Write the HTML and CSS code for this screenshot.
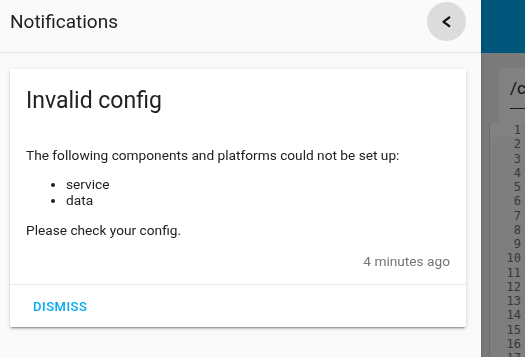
FILE: index.html
```html
<!DOCTYPE html>
<html>
<head>
<meta charset="utf-8">
<link rel="stylesheet" href="styles.css">
</head>
<body>
<div class="app">
  <div class="app-header"></div>
  <div class="app-main">
    <div class="editor-card">
      <div class="editor-title">/config/configuration.yaml</div>
      <div class="editor-rule"></div>
    </div>
    <div class="editor">
      <div class="gutter">
        <div class="ln active">1</div><div class="ln">2</div><div class="ln">3</div><div class="ln">4</div>
        <div class="ln">5</div><div class="ln">6</div><div class="ln">7</div><div class="ln">8</div>
        <div class="ln">9</div><div class="ln">10</div><div class="ln">11</div><div class="ln">12</div>
        <div class="ln">13</div><div class="ln">14</div><div class="ln">15</div><div class="ln">16</div>
        <div class="ln">17</div>
      </div>
    </div>
  </div>
</div>
<div class="scrim"></div>
<aside class="drawer">
  <header class="drawer-header">
    <div class="drawer-title">Notifications</div>
    <button class="close-btn" aria-label="Close">
      <svg width="39" height="39" viewBox="0 0 39 39"><polyline points="22.3,15.3 16.5,19.8 22.3,24.2" fill="none" stroke="#111" stroke-width="2.2" stroke-linecap="round" stroke-linejoin="round"/></svg>
    </button>
  </header>
  <div class="drawer-body">
    <div class="card">
      <div class="card-header">Invalid config</div>
      <div class="card-content">
        <p>The following components and platforms could not be set up:</p>
        <ul>
          <li>service</li>
          <li>data</li>
        </ul>
        <p>Please check your config.</p>
        <div class="time">4 minutes ago</div>
      </div>
      <div class="card-actions">
        <button class="dismiss">Dismiss</button>
      </div>
    </div>
  </div>
</aside>
</body>
</html>
```
FILE: styles.css
```css
html, body {
  margin: 0;
  padding: 0;
  height: 100%;
  overflow: hidden;
}
body {
  font-family: Roboto, "Liberation Sans", sans-serif;
  background: #f0f0f0;
}
.app {
  height: 100%;
  display: flex;
  flex-direction: column;
}
.app-header {
  height: 53px;
  background: #03a9f4;
  flex: none;
}
.app-main {
  flex: 1;
  padding: 15px 0 0 489px;
  background: #f0f0f0;
  overflow: hidden;
}
.editor-card {
  margin-left: 10px;
  background: #ffffff;
  height: 55px;
  padding: 11px 0 0 11px;
  box-sizing: border-box;
  border-radius: 2px 0 0 0;
  overflow: hidden;
}
.editor-title {
  font-size: 17px;
  color: #212121;
  line-height: 18px;
  white-space: nowrap;
}
.editor-rule {
  margin-top: 11px;
  height: 1px;
  background: #333;
}
.editor {
  background: #f7f7f7;
  border-left: 1px solid #d4d4d4;
}
.gutter {
  font-family: "DejaVu Sans Mono", monospace;
  font-size: 12px;
  color: #6e6e6e;
  text-align: right;
  padding-right: 4px;
}
.ln {
  height: 14.27px;
  line-height: 14.27px;
}
.ln.active {
  background: #ffffff;
}
.scrim {
  position: fixed;
  inset: 0;
  background: rgba(0, 0, 0, 0.49);
}
.drawer {
  position: fixed;
  top: 0;
  left: 0;
  bottom: 0;
  width: 481px;
  background: #fafafa;
  display: flex;
  flex-direction: column;
  box-shadow: 1px 0 2px rgba(0,0,0,0.15);
}
.drawer-header {
  height: 52px;
  border-bottom: 1px solid #e2e2e2;
  display: flex;
  align-items: center;
  justify-content: space-between;
  padding: 0 15px 0 10px;
  flex: none;
}
.drawer-title {
  font-size: 19px;
  color: #212121;
  margin-top: -9px;
}
.close-btn {
  width: 39px;
  height: 39px;
  border-radius: 50%;
  border: none;
  padding: 0;
  background: #dcdcdc;
  display: flex;
  align-items: center;
  justify-content: center;
  margin-top: -9px;
}
.drawer-body {
  padding: 16px 15px 0 10px;
}
.card {
  background: #fff;
  border-radius: 2px;
  box-shadow: 0 2px 2px rgba(0,0,0,0.14), 0 1px 5px rgba(0,0,0,0.12), 0 3px 1px -2px rgba(0,0,0,0.2);
}
.card-header {
  font-size: 23px;
  line-height: 32px;
  color: #212121;
  padding: 16px 16px 0;
}
.card-content {
  padding: 30px 16px 0;
  font-size: 13.7px;
  color: #212121;
}
.card-content p {
  margin: 0;
  line-height: 16.4px;
}
.card-content ul {
  margin: 13px 0;
  padding-left: 40px;
  line-height: 16px;
}
.card-content ul + p {
  margin-top: 14px;
}
.time {
  text-align: right;
  color: #757575;
  margin-top: 14px;
  line-height: 16px;
  padding-bottom: 15px;
}
.card-actions {
  border-top: 1px solid #e8e8e8;
  padding: 4px 8px 2px;
}
.dismiss {
  height: 36px;
  border: none;
  background: none;
  padding: 0 15px;
  font-family: Roboto, "Liberation Sans", sans-serif;
  font-size: 13px;
  font-weight: 500;
  letter-spacing: 0.5px;
  text-transform: uppercase;
  color: #03a9f4;
}
```
